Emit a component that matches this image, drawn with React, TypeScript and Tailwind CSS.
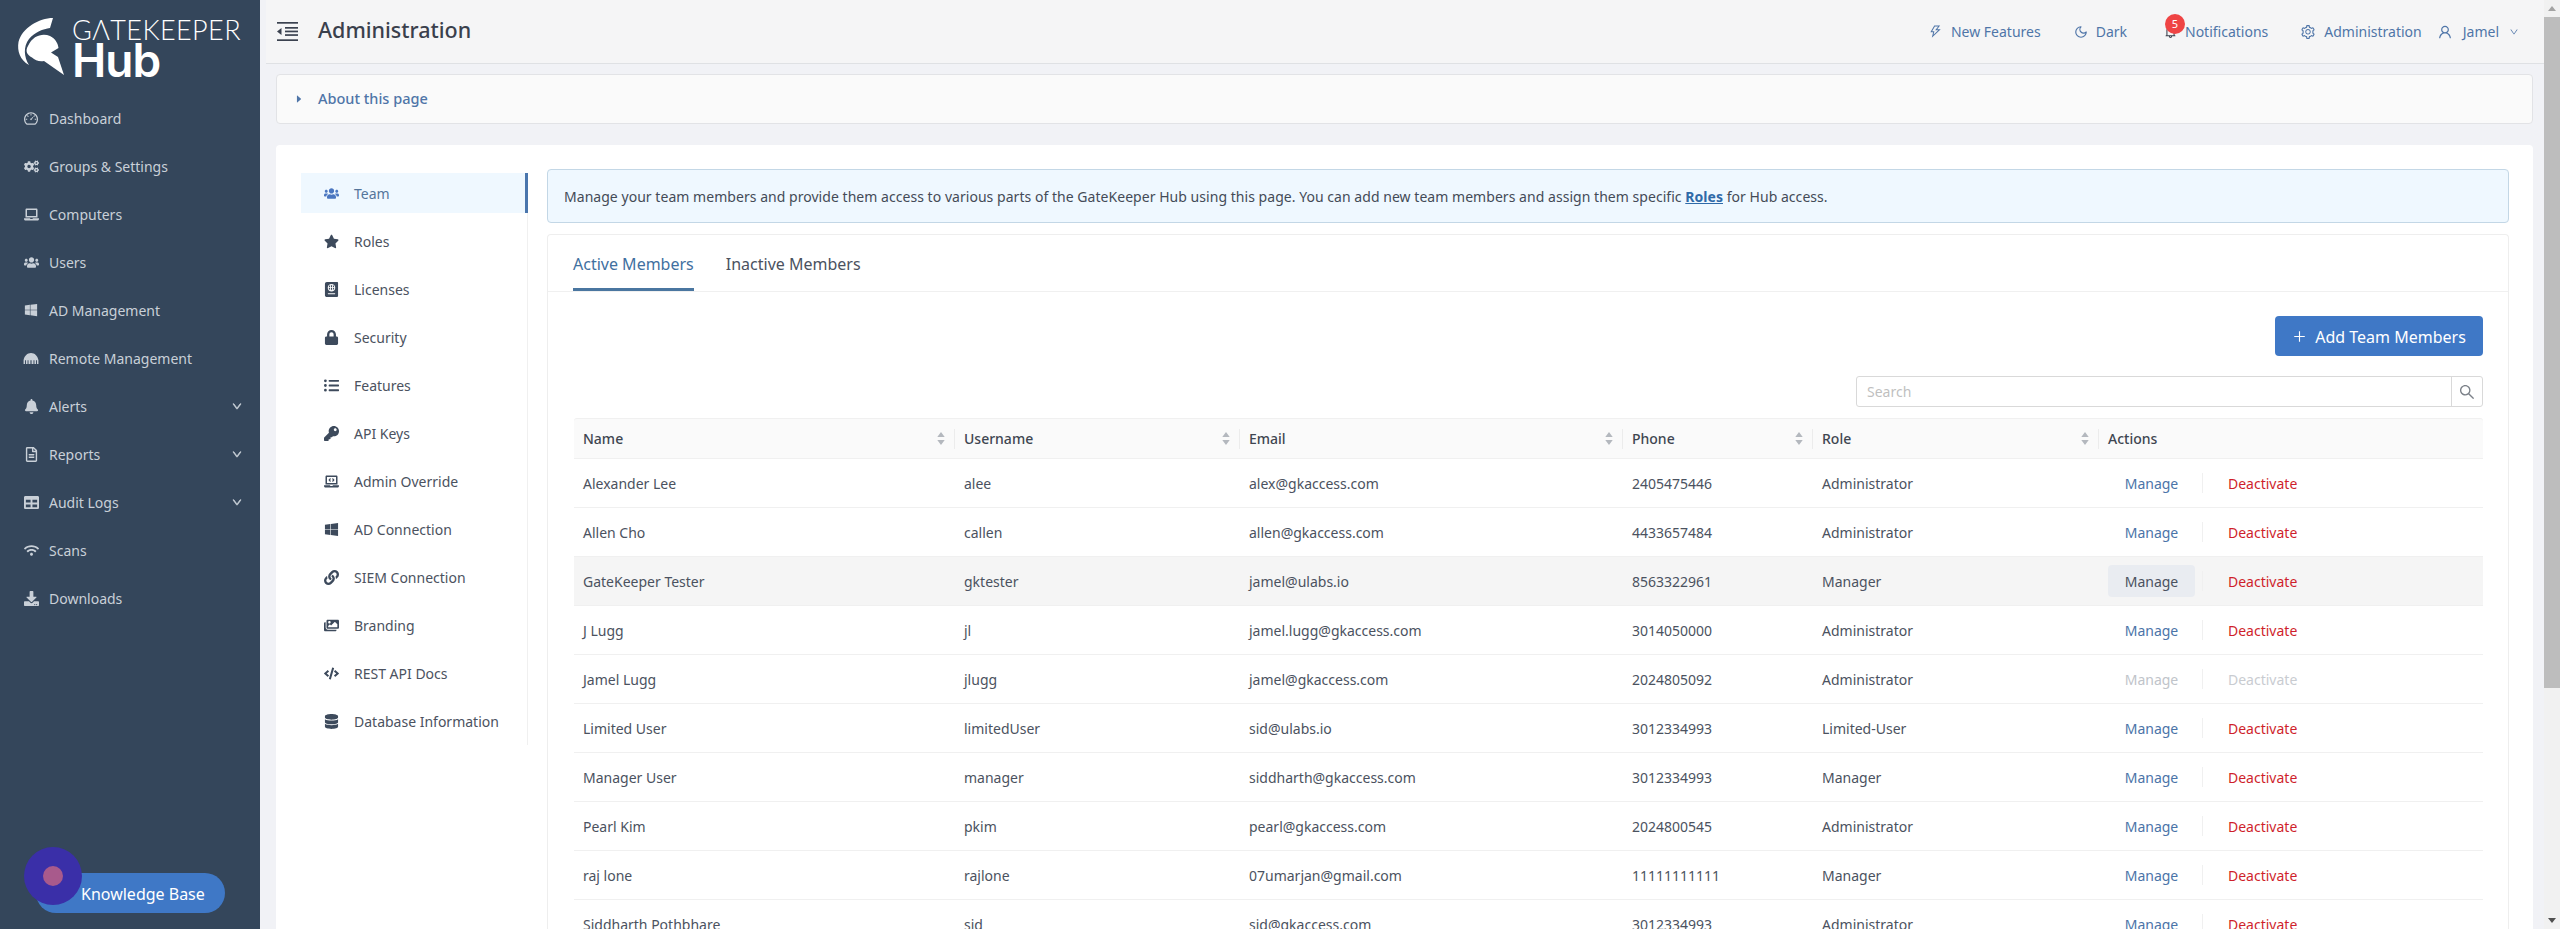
import type { ReactNode } from "react";
import {
  AiOutlineBell,
  AiOutlineCaretRight,
  AiOutlineDashboard,
  AiOutlineDown,
  AiOutlinePlus,
  AiOutlineSearch,
  AiOutlineSetting,
  AiOutlineThunderbolt,
  AiOutlineUser,
} from "react-icons/ai";
import {
  FaBell,
  FaCode,
  FaCogs,
  FaDatabase,
  FaDownload,
  FaImages,
  FaKey,
  FaLaptop,
  FaLaptopCode,
  FaLink,
  FaListUl,
  FaLock,
  FaPassport,
  FaRegFileAlt,
  FaStar,
  FaTable,
  FaUsers,
  FaWifi,
  FaWindows,
} from "react-icons/fa";
import { LuMoon } from "react-icons/lu";

const FONT = "font-['Noto_Sans','Open_Sans',sans-serif]";

const RemoteIcon = () => (
  <svg viewBox="0 0 16 14" className="h-[13px] w-[16px] fill-current">
    <path d="M0 13V8.5C1 4 4 1 8 1s7 3 8 7.5V13h-1.6V9h-1v4h-1.7V9h-1v4H8.6V9h-1.2v4H5.3V9h-1v4H2.6V9h-1v4z" />
  </svg>
);

const MenuFold = () => (
  <svg viewBox="0 0 21 19" className="h-[19px] w-[21px] shrink-0 fill-[#3b4250]">
    <rect x="0" y="0" width="21" height="1.7" />
    <rect x="8" y="5" width="13" height="1.7" />
    <rect x="8" y="8.6" width="13" height="1.7" />
    <rect x="8" y="12.2" width="13" height="1.7" />
    <rect x="0" y="17.3" width="21" height="1.7" />
    <path d="M0 9.500L4.500 6v7z" />
  </svg>
);

const NAV: { label: string; icon: ReactNode; chevron?: boolean }[] = [
  { label: "Dashboard", icon: <AiOutlineDashboard className="h-[17px] w-[17px]" /> },
  { label: "Groups & Settings", icon: <FaCogs className="h-[15px] w-[15px]" /> },
  { label: "Computers", icon: <FaLaptop className="h-[15px] w-[15px]" /> },
  { label: "Users", icon: <FaUsers className="h-[15px] w-[15px]" /> },
  { label: "AD Management", icon: <FaWindows className="h-[14px] w-[14px]" /> },
  { label: "Remote Management", icon: <RemoteIcon /> },
  { label: "Alerts", icon: <FaBell className="h-[15px] w-[15px]" />, chevron: true },
  { label: "Reports", icon: <FaRegFileAlt className="h-[15px] w-[15px]" />, chevron: true },
  { label: "Audit Logs", icon: <FaTable className="h-[15px] w-[15px]" />, chevron: true },
  { label: "Scans", icon: <FaWifi className="h-[15px] w-[15px]" /> },
  { label: "Downloads", icon: <FaDownload className="h-[15px] w-[15px]" /> },
];

const ADMIN_NAV: { label: string; icon: ReactNode }[] = [
  { label: "Team", icon: <FaUsers /> },
  { label: "Roles", icon: <FaStar /> },
  { label: "Licenses", icon: <FaPassport /> },
  { label: "Security", icon: <FaLock /> },
  { label: "Features", icon: <FaListUl /> },
  { label: "API Keys", icon: <FaKey /> },
  { label: "Admin Override", icon: <FaLaptopCode /> },
  { label: "AD Connection", icon: <FaWindows /> },
  { label: "SIEM Connection", icon: <FaLink /> },
  { label: "Branding", icon: <FaImages /> },
  { label: "REST API Docs", icon: <FaCode /> },
  { label: "Database Information", icon: <FaDatabase /> },
];

const MEMBERS = [
  ["Alexander Lee", "alee", "alex@gkaccess.com", "2405475446", "Administrator"],
  ["Allen Cho", "callen", "allen@gkaccess.com", "4433657484", "Administrator"],
  ["GateKeeper Tester", "gktester", "jamel@ulabs.io", "8563322961", "Manager"],
  ["J Lugg", "jl", "jamel.lugg@gkaccess.com", "3014050000", "Administrator"],
  ["Jamel Lugg", "jlugg", "jamel@gkaccess.com", "2024805092", "Administrator"],
  ["Limited User", "limitedUser", "sid@ulabs.io", "3012334993", "Limited-User"],
  ["Manager User", "manager", "siddharth@gkaccess.com", "3012334993", "Manager"],
  ["Pearl Kim", "pkim", "pearl@gkaccess.com", "2024800545", "Administrator"],
  ["raj lone", "rajlone", "07umarjan@gmail.com", "11111111111", "Manager"],
  ["Siddharth Pothbhare", "sid", "sid@gkaccess.com", "3012334993", "Administrator"],
];

const COLUMNS = ["Name", "Username", "Email", "Phone", "Role"];
const GRID = "grid grid-cols-[381px_285px_383px_190px_286px_384px]";

const SortCaret = () => (
  <svg viewBox="0 0 8 14" className="h-[13px] w-[8px] fill-[#b4b8be]">
    <path d="M4 0l4 5.500H0zM4 14L0 8.500h8z" />
  </svg>
);

const Helmet = () => (
  <svg viewBox="0 0 60 75" className="h-[75px] w-[60px] shrink-0 fill-white">
    <path d="M43 8C29 8 12 18 8.500 32C7 41 10 50 19 55C14 47 13 37 19 29C25 22 33 19 40 18Z" />
    <path d="M18 36C23 25 33 23 40 26C46 29 48 34 48.500 38L41 42.500L48 47L54 65L34 51C29 52 25 50 22 47.500C17 45 15 41 18 36Z" />
  </svg>
);

const TopLink = ({ icon, label, gap }: { icon: ReactNode; label: string; gap: string }) => (
  <div className={`flex items-center ${gap} text-[14px] text-[#4f75a8]`}>
    {icon}
    <span>{label}</span>
  </div>
);

function Sidebar() {
  return (
    <aside className="relative flex w-[260px] shrink-0 flex-col bg-[#34465b]">
      <div className="flex h-[94px] pl-[10px] pt-[10px]">
        <Helmet />
        <div className="ml-[2px] flex flex-col text-white">
          <span className="mt-[4px] h-[32px] font-['Lato',sans-serif] text-[27px] font-light leading-[32px] tracking-[0.4px]">
            GΛTEKEEPER
          </span>
          <span className="-mt-[4px] h-[36px] font-['Inter',sans-serif] text-[46px] font-semibold leading-[36px] tracking-[-1px]">
            Hub
          </span>
        </div>
      </div>
      {NAV.map((item) => (
        <div key={item.label} className="flex h-[48px] items-center pl-[23px] pr-[16px] text-[14px] text-[#c9d0d8]">
          <span className="flex w-[16px] shrink-0 justify-center">{item.icon}</span>
          <span className="ml-[10px]">{item.label}</span>
          {item.chevron && <AiOutlineDown className="ml-auto h-[11px] w-[14px] stroke-[60]" />}
        </div>
      ))}
      <div className="mt-auto mb-[16px] ml-[36px] flex h-[40px] w-[189px] items-center rounded-full bg-[#3f78c6] pl-[45px] pt-[1px] text-[16px] text-white">
        Knowledge Base
      </div>
      <div className="absolute left-[24px] top-[847px] flex h-[58px] w-[58px] items-center justify-center rounded-full bg-[#3a2fa8]">
        <div className="h-[20px] w-[20px] rounded-full bg-[#a85a8c]" />
      </div>
    </aside>
  );
}

function Header() {
  return (
    <header className="ml-[6px] flex h-[64px] shrink-0 items-center border-b border-[#dfe1e4] bg-[#f5f5f6] pl-[11px] pr-[25px]">
      <MenuFold />
      <h1 className="ml-[20px] pb-[3px] text-[21.5px] font-medium text-[#3a404c]">Administration</h1>
      <div className="ml-auto flex items-center">
        <TopLink gap="gap-[8px]" icon={<AiOutlineThunderbolt className="h-[15px] w-[15px]" />} label="New Features" />
        <div className="ml-[33px]">
          <TopLink gap="gap-[8px]" icon={<LuMoon className="h-[14px] w-[14px]" />} label="Dark" />
        </div>
        <div className="relative ml-[36px] flex items-center gap-[7px] text-[14px] text-[#4f75a8]">
          <AiOutlineBell className="h-[15px] w-[15px] text-[#3a404c]" />
          <span>Notifications</span>
          <span className="absolute -top-[7px] left-[2px] flex h-[20px] w-[20px] items-center justify-center rounded-full bg-[#ef4444] text-[11px] text-white">
            5
          </span>
        </div>
        <div className="ml-[32px]">
          <TopLink gap="gap-[8px]" icon={<AiOutlineSetting className="h-[16px] w-[16px]" />} label="Administration" />
        </div>
        <div className="ml-[15px]">
          <TopLink gap="gap-[10px]" icon={<AiOutlineUser className="h-[16px] w-[16px]" />} label="Jamel" />
        </div>
        <AiOutlineDown className="ml-[10px] h-[10px] w-[10px] text-[#4f75a8]" />
      </div>
    </header>
  );
}

function AdminNav() {
  return (
    <nav className="mt-[28px] flex h-[572px] w-[227px] shrink-0 flex-col gap-[8px] border-r border-[#f0f0f0]">
      {ADMIN_NAV.map((item) => {
        const active = item.label === "Team";
        return (
          <div
            key={item.label}
            className={
              active
                ? "-mr-px flex h-[40px] shrink-0 items-center border-r-[3px] border-[#4a76ad] bg-[#eff8ff] pl-[23px] text-[14px] text-[#55759b]"
                : "flex h-[40px] shrink-0 items-center pl-[23px] text-[14px] text-[#4b5260]"
            }
          >
            <span className={active ? "w-[15px] text-[15px] text-[#4a76c0]" : "w-[15px] text-[15px] text-[#3d4a5c]"}>
              {item.icon}
            </span>
            <span className="ml-[15px]">{item.label}</span>
          </div>
        );
      })}
    </nav>
  );
}

function MembersTable() {
  return (
    <div className="mt-[11px] w-[1909px] text-[14px] text-[#4b5260]">
      <div className={`${GRID} h-[41px] rounded-t-[3px] border-y border-[#f0f0f0] bg-[#fafafa] font-medium text-[#3f4651]`}>
        {COLUMNS.map((col) => (
          <div key={col} className="flex items-center pl-[9px]">
            <span>{col}</span>
            <span className="ml-auto">
              <SortCaret />
            </span>
            <span className="ml-[9px] h-[20px] w-px bg-[#ececec]" />
          </div>
        ))}
        <div className="flex items-center pl-[9px]">Actions</div>
      </div>
      {MEMBERS.map((m, i) => {
        const hovered = m[1] === "gktester";
        const disabled = m[1] === "jlugg";
        return (
          <div key={m[1]} className={`${GRID} h-[49px] border-b border-[#f0f0f0] ${hovered ? "bg-[#f5f5f5]" : ""}`}>
            {m.map((cell, c) => (
              <div key={`${i}-${c}`} className="flex items-center pl-[9px]">
                {cell}
              </div>
            ))}
            <div className="flex items-center pl-[9px]">
              <span
                className={
                  hovered
                    ? "flex h-[32px] w-[87px] items-center justify-center rounded-[4px] bg-[#e9ecf1] text-[#4b5260]"
                    : disabled
                      ? "flex h-[32px] w-[87px] items-center justify-center text-[#c0c4ca]"
                      : "flex h-[32px] w-[87px] items-center justify-center text-[#4b74a8]"
                }
              >
                Manage
              </span>
              <span className="ml-[7px] h-[20px] w-px bg-[#f0f0f0]" />
              <span className={disabled ? "ml-[25px] text-[#c9ccd1]" : "ml-[25px] text-[#cf1f2c]"}>Deactivate</span>
            </div>
          </div>
        );
      })}
    </div>
  );
}

function TeamPanel() {
  return (
    <div className="flex min-w-0 flex-1 flex-col pt-[24px]">
      <div className="flex h-[54px] shrink-0 items-center rounded-[4px] border border-[#c3d7e6] bg-[#eff8ff] pl-[16px] text-[14px] tracking-[0.04px] text-[#444b57]">
        <span>
          Manage your team members and provide them access to various parts of the GateKeeper Hub using this page. You can add new team members and assign them specific{" "}
          <span className="font-bold text-[#2f6aa8] underline">Roles</span> for Hub access.
        </span>
      </div>
      <div className="mt-[11px] flex-1 rounded-t-[4px] border border-b-0 border-[#eeeeee] pl-[26px] pr-[25px]">
        <div className="-ml-[26px] -mr-[25px] flex h-[57px] items-end gap-[32px] border-b border-[#f0f0f0] px-[25px] text-[16px]">
          <span className="flex h-[57px] items-center border-b-[3px] border-[#4a76a0] pt-[6px] text-[#41709f]">Active Members</span>
          <span className="flex h-[57px] items-center pt-[3px] text-[#4b5260]">Inactive Members</span>
        </div>
        <div className="mt-[24px] flex justify-end">
          <button className="flex h-[40px] w-[208px] items-center justify-center gap-[8px] rounded-[4px] bg-[#3f78c6] pt-[1px] text-[16px] text-white">
            <AiOutlinePlus className="h-[15px] w-[15px]" />
            Add Team Members
          </button>
        </div>
        <div className="mt-[20px] flex justify-end">
          <div className="flex h-[31px] w-[627px] rounded-[3px] border border-[#d9d9d9]">
            <span className="flex-1 pl-[10px] text-[14px] leading-[29px] text-[#bfbfbf]">Search</span>
            <span className="flex w-[31px] items-center justify-center border-l border-[#d9d9d9] text-[#7b8088]">
              <AiOutlineSearch className="h-[18px] w-[18px]" />
            </span>
          </div>
        </div>
        <MembersTable />
      </div>
    </div>
  );
}

export default function App() {
  return (
    <div className={`${FONT} flex h-[929px] w-[2560px] overflow-hidden bg-[#f1f2f6]`}>
      <Sidebar />
      <main className="flex min-w-0 flex-1 flex-col">
        <Header />
        <div className="flex min-h-0 flex-1 flex-col pl-[16px] pr-[11px]">
          <div className="mt-[10px] flex h-[50px] shrink-0 items-center rounded-[4px] border border-[#e2e3e6] bg-[#fafafa] pl-[17px] pb-[1px] text-[14.5px] font-medium text-[#4f75a8]">
            <AiOutlineCaretRight className="h-[10px] w-[10px]" />
            <span className="ml-[14px]">About this page</span>
          </div>
          <div className="mt-[21px] flex min-h-0 flex-1 rounded-t-[4px] bg-white pl-[25px] pr-[24px]">
            <AdminNav />
            <div className="w-[19px] shrink-0" />
            <TeamPanel />
          </div>
        </div>
      </main>
      <div className="flex w-[16px] shrink-0 flex-col bg-[#f1f1f1]">
        <div className="flex h-[17px] items-center justify-center">
          <div className="h-0 w-0 border-x-[4px] border-b-[5px] border-x-transparent border-b-[#a3a3a3]" />
        </div>
        <div className="h-[671px] bg-[#bdbdbd]" />
        <div className="mt-auto flex h-[17px] items-center justify-center">
          <div className="h-0 w-0 border-x-[4px] border-t-[5px] border-x-transparent border-t-[#505050]" />
        </div>
      </div>
    </div>
  );
}
